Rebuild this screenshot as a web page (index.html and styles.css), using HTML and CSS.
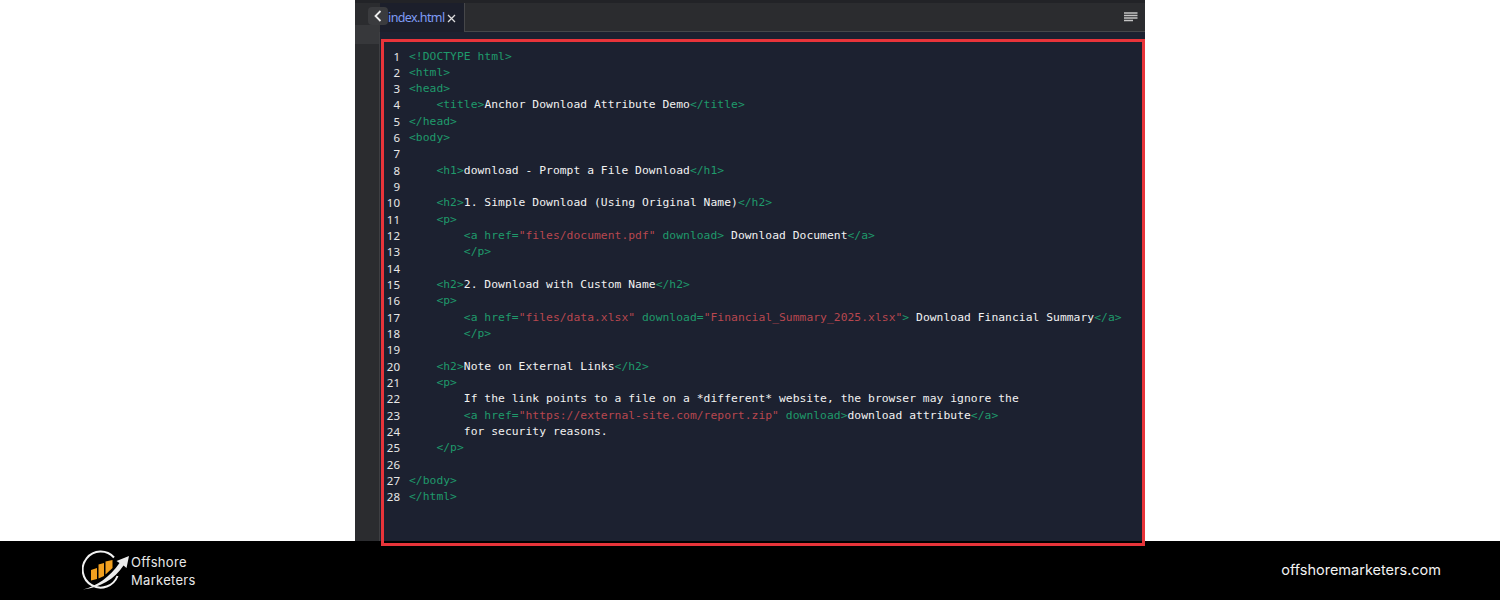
FILE: index.html
```html
<!DOCTYPE html>
<html lang="en">
<head>
<meta charset="utf-8">
<title>Anchor Download Attribute Demo</title>
<link rel="stylesheet" href="styles.css">
</head>
<body>
<main class="stage">
  <section class="editor">
    <header class="tabbar">
      <div class="gutter-top"><div class="gutter-mark"></div></div>
      <div class="tab">
        <button class="back" aria-label="Back"><svg width="8" height="12" viewBox="0 0 8 12"><path d="M6.5 1 L1.5 6 L6.5 11" fill="none" stroke="#eee" stroke-width="1.8"/></svg></button>
        <span class="tab-name">index.html</span>
        <svg class="tab-x" width="9" height="9" viewBox="0 0 9 9"><path d="M1 1 L8 8 M8 1 L1 8" stroke="#ddd" stroke-width="1.3"/></svg>
      </div>
      <div class="tabfill">
        <svg width="14" height="10" viewBox="0 0 14 10"><path d="M0 1 H13.500 M0 3.500 H13.500 M0 6 H13.500 M0 8.600 H9" stroke="#c4c4c4" stroke-width="1.500"/></svg>
      </div>
    </header>
    <div class="body">
      <aside class="side"><div class="side-mark"></div></aside>
      <div class="codewrap">
        <div class="code">
<div class="ln"><i>1</i><code><b>&lt;!DOCTYPE html&gt;</b></code></div>
<div class="ln"><i>2</i><code><b>&lt;html&gt;</b></code></div>
<div class="ln"><i>3</i><code><b>&lt;head&gt;</b></code></div>
<div class="ln"><i>4</i><code>    <b>&lt;title&gt;</b>Anchor Download Attribute Demo<b>&lt;/title&gt;</b></code></div>
<div class="ln"><i>5</i><code><b>&lt;/head&gt;</b></code></div>
<div class="ln"><i>6</i><code><b>&lt;body&gt;</b></code></div>
<div class="ln"><i>7</i><code></code></div>
<div class="ln"><i>8</i><code>    <b>&lt;h1&gt;</b>download - Prompt a File Download<b>&lt;/h1&gt;</b></code></div>
<div class="ln"><i>9</i><code></code></div>
<div class="ln"><i>10</i><code>    <b>&lt;h2&gt;</b>1. Simple Download (Using Original Name)<b>&lt;/h2&gt;</b></code></div>
<div class="ln"><i>11</i><code>    <b>&lt;p&gt;</b></code></div>
<div class="ln"><i>12</i><code>        <b>&lt;a href=</b><s>"files/document.pdf"</s> <b>download&gt;</b> Download Document<b>&lt;/a&gt;</b></code></div>
<div class="ln"><i>13</i><code>        <b>&lt;/p&gt;</b></code></div>
<div class="ln"><i>14</i><code></code></div>
<div class="ln"><i>15</i><code>    <b>&lt;h2&gt;</b>2. Download with Custom Name<b>&lt;/h2&gt;</b></code></div>
<div class="ln"><i>16</i><code>    <b>&lt;p&gt;</b></code></div>
<div class="ln"><i>17</i><code>        <b>&lt;a href=</b><s>"files/data.xlsx"</s> <b>download=</b><s>"Financial_Summary_2025.xlsx"</s><b>&gt;</b> Download Financial Summary<b>&lt;/a&gt;</b></code></div>
<div class="ln"><i>18</i><code>        <b>&lt;/p&gt;</b></code></div>
<div class="ln"><i>19</i><code></code></div>
<div class="ln"><i>20</i><code>    <b>&lt;h2&gt;</b>Note on External Links<b>&lt;/h2&gt;</b></code></div>
<div class="ln"><i>21</i><code>    <b>&lt;p&gt;</b></code></div>
<div class="ln"><i>22</i><code>        If the link points to a file on a *different* website, the browser may ignore the</code></div>
<div class="ln"><i>23</i><code>        <b>&lt;a href=</b><s>"https://external-site.com/report.zip"</s> <b>download&gt;</b>download attribute<b>&lt;/a&gt;</b></code></div>
<div class="ln"><i>24</i><code>        for security reasons.</code></div>
<div class="ln"><i>25</i><code>    <b>&lt;/p&gt;</b></code></div>
<div class="ln"><i>26</i><code></code></div>
<div class="ln"><i>27</i><code><b>&lt;/body&gt;</b></code></div>
<div class="ln"><i>28</i><code><b>&lt;/html&gt;</b></code></div>
        </div>
      </div>
    </div>
    <div class="highlight"></div>
  </section>
</main>
<footer class="footer">
  <div class="brand">
    <svg width="48" height="44" viewBox="0 0 48 44">
      <path d="M32 8.500 A18 18 0 1 0 35.500 27" fill="none" stroke="#f2f2f2" stroke-width="2"/>
      <path d="M9 21 L15 19 L15 30 L9 31.500 Z" fill="#f3a01f"/>
      <path d="M16.500 15.500 L22 14 L22 27 L16.500 29.500 Z" fill="#f3a01f"/>
      <path d="M23.500 12.500 L30.500 11 L30.500 19 L23.500 25.500 Z" fill="#f3a01f"/>
      <path d="M1 40.500 C15 37 28 28 37.500 14 L34.500 12 L47 7 L44.500 19 L41.500 16.500 C33 30 17 39 1 40.500 Z" fill="#ececec"/>
    </svg>
    <div class="brand-name">Offshore<br>Marketers</div>
  </div>
  <div class="site">offshoremarketers.com</div>
</footer>
</body>
</html>
```
FILE: styles.css
```css
* { box-sizing: border-box; }
html, body { margin: 0; height: 100%; }
body {
  width: 1500px;
  height: 600px;
  overflow: hidden;
  background: #fff;
  display: flex;
  flex-direction: column;
  font-family: "Liberation Sans", sans-serif;
}
.stage {
  height: 541px;
  display: flex;
  justify-content: center;
}
.editor {
  position: relative;
  width: 790px;
  height: 541px;
  display: flex;
  flex-direction: column;
  background: #1b1f2c;
}
.tabbar {
  height: 32px;
  display: flex;
  background: #2b2c2f;
  border-top: 3px solid #222327;
  border-bottom: 1px solid #46474a;
}
.gutter-top {
  width: 25px;
  margin-bottom: -1px;
  display: flex;
  align-items: flex-end;
  background: #2b2c2f;
}
.gutter-mark { width: 100%; height: 7px; background: #37383b; }
.tab {
  width: 85px;
  margin-bottom: -1px;
  display: flex;
  align-items: center;
  background: #1c1f2b;
  border-right: 1px solid #46474a;
  position: relative;
  padding-left: 8px;
}
.back {
  position: absolute;
  left: -12px;
  top: 4px;
  width: 20px;
  height: 18px;
  padding: 0;
  border: 0;
  border-radius: 4px;
  background: #3a3b3e;
  display: flex;
  align-items: center;
  justify-content: center;
}
.tab-name {
  font-family: "Noto Sans", sans-serif;
  font-size: 12.500px;
  letter-spacing: -0.6px;
  color: #7f9cf5;
}
.tab-x { margin-left: 2px; margin-top: 2px; }
.tabfill {
  flex: 1;
  display: flex;
  align-items: center;
  justify-content: flex-end;
  padding-right: 7px;
}
.body { flex: 1; display: flex; min-height: 0; }
.side { width: 25px; background: #2b2c2f; border-right: 1px solid #3e3f42; }
.side-mark { height: 12px; background: #37383b; }
.codewrap { flex: 1; background: #1c2130; padding-top: 16.500px; }
.code { font-family: "DejaVu Sans Mono", monospace; font-size: 11.3px; letter-spacing: 0.05px; }
.ln { height: 16.33px; line-height: 16.33px; display: flex; white-space: pre; color: #f2f2f2; }
.ln i {
  width: 20px;
  margin-right: 9px;
  text-align: right;
  font-style: normal;
  font-family: "Noto Sans", sans-serif;
  font-size: 11.500px;
  letter-spacing: 0;
  color: #e8e8e8;
}
.ln code { font: inherit; }
.ln b { font-weight: normal; color: #1f9a6b; }
.ln s { text-decoration: none; color: #b8474f; }
.highlight {
  position: absolute;
  left: 26px;
  top: 39px;
  width: 764px;
  height: 507px;
  border: 3px solid #e8343a;
  z-index: 2;
  pointer-events: none;
}
.footer {
  height: 59px;
  background: #000;
  display: flex;
  align-items: center;
  justify-content: space-between;
  padding: 0 59px 0 82px;
  color: #f2f2f2;
}
.brand { display: flex; align-items: center; gap: 1px; }
.brand-name {
  font-family: "Inter", sans-serif;
  font-size: 13px;
  line-height: 18px;
  letter-spacing: 0.3px;
  color: #e8e8e8;
}
.site {
  font-family: "Inter", sans-serif;
  font-size: 14.500px;
  padding-bottom: 3px;
}
```
